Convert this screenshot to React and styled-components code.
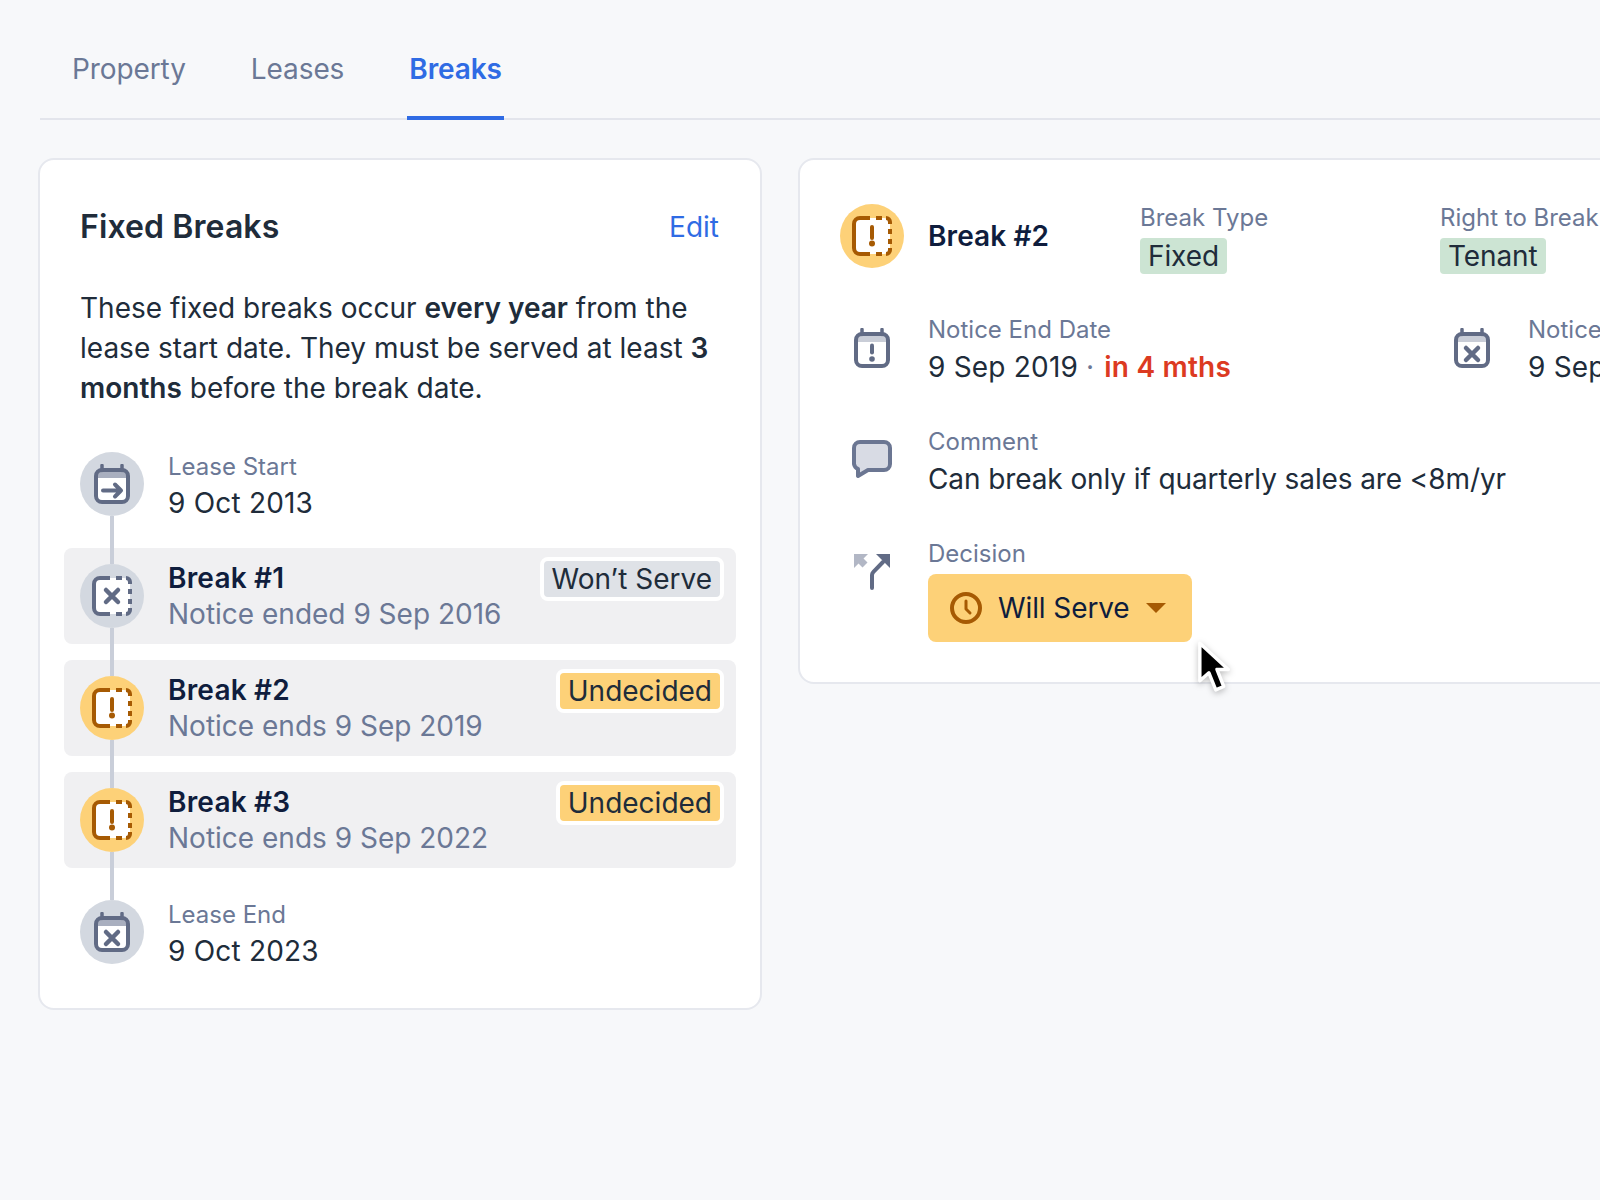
import React from "react";
import styled, { createGlobalStyle } from "styled-components";

const GlobalStyle = createGlobalStyle`
  html, body {
    margin: 0;
    height: 100%;
    overflow: hidden;
    background: #f7f8fa;
  }
  body {
    font-family: Inter, "Noto Sans", sans-serif;
    -webkit-font-smoothing: antialiased;
  }
`;

const SLATE = "#616b85";
const BROWN = "#a65a03";
const AMBER = "#fdd178";

const Page = styled.div`
  position: relative;
  width: 1600px;
  height: 1200px;
  overflow: hidden;
`;

const Tabs = styled.nav`
  display: flex;
  gap: 61px;
  height: 118px;
  margin: 0 0 0 40px;
  padding-left: 30px;
  border-bottom: 2px solid #e3e5ec;
`;

const Tab = styled.a`
  position: relative;
  padding: 49px 2px 0;
  font-size: 28px;
  line-height: 40px;
  letter-spacing: -0.1px;
  font-weight: ${(p) => (p.$active ? 600 : 400)};
  color: ${(p) => (p.$active ? "#2f6be4" : "#6b7896")};
  &::after {
    content: "";
    display: ${(p) => (p.$active ? "block" : "none")};
    position: absolute;
    left: 0;
    right: 0;
    bottom: -2px;
    height: 4px;
    background: #2f6be4;
  }
`;

const Columns = styled.div`
  display: flex;
  align-items: flex-start;
  gap: 36px;
  margin: 38px 0 0 38px;
`;

const Card = styled.section`
  box-sizing: border-box;
  flex: 0 0 724px;
  height: 852px;
  padding: 47px 40px 0;
  background: #fff;
  border: 2px solid #e6e8ee;
  border-radius: 16px;
`;

const Panel = styled.section`
  box-sizing: border-box;
  flex: 0 0 1000px;
  height: 526px;
  padding: 44px 40px 0;
  background: #fff;
  border: 2px solid #e6e8ee;
  border-radius: 16px;
`;

const CardHeader = styled.header`
  display: flex;
  justify-content: space-between;
  align-items: center;
  height: 40px;
`;

const CardTitle = styled.h2`
  margin: 0;
  font-size: 32px;
  line-height: 40px;
  letter-spacing: 0.1px;
  font-weight: 600;
  color: #202c3a;
`;

const EditLink = styled.a`
  margin-right: 1px;
  font-size: 28px;
  line-height: 40px;
  color: #2f6be4;
`;

const Intro = styled.p`
  margin: 41px 0 0;
  font-size: 28px;
  line-height: 40px;
  color: #202c3a;
  b {
    font-weight: 600;
  }
`;

const Timeline = styled.div`
  display: flex;
  flex-direction: column;
  gap: 16px;
  margin: 28px -16px 0;
`;

const Item = styled.div`
  display: flex;
  align-items: flex-start;
  height: 96px;
  box-sizing: border-box;
  padding: 16px 0 0 16px;
  border-radius: 8px;
  background: ${(p) => (p.$shaded ? "#f0f0f2" : "transparent")};
`;

const Marker = styled.div`
  position: relative;
  flex: none;
  display: flex;
  align-items: center;
  justify-content: center;
  width: 64px;
  height: 64px;
  border-radius: 50%;
  background: ${(p) => (p.$amber ? AMBER : "#d3d8e0")};
  &::after {
    content: "";
    display: ${(p) => (p.$last ? "none" : "block")};
    position: absolute;
    left: 30px;
    top: 64px;
    width: 4px;
    height: 48px;
    background: #c9ced9;
  }
`;

const ItemText = styled.div`
  flex: 1;
  margin: ${(p) => (p.$shaded ? -4 : -1)}px 0 0 24px;
`;

const Label = styled.div`
  font-size: 24px;
  line-height: 32px;
  color: #6b7896;
`;

const Value = styled.div`
  margin-top: 2px;
  font-size: 28px;
  line-height: 36px;
  letter-spacing: 0.2px;
  color: #202c3a;
`;

const FieldValue = styled(Value)`
  margin-top: 3px;
`;

const Sentence = styled(FieldValue)`
  letter-spacing: -0.1px;
`;

const ItemTitle = styled.div`
  font-size: 28px;
  line-height: 36px;
  letter-spacing: 0.2px;
  font-weight: 600;
  color: #0f1d3d;
`;

const ItemSub = styled.div`
  font-size: 28px;
  line-height: 36px;
  color: #6b7896;
`;

const Badge = styled.span`
  flex: none;
  margin: -7px 12px 0 0;
  padding: 0 8px;
  font-size: 28px;
  line-height: 36px;
  color: #202c3a;
  border: 4px solid #fff;
  border-radius: 8px;
  background: ${(p) => (p.$amber ? AMBER : "#dfe2e7")};
`;

const HeaderGrid = styled.div`
  display: grid;
  grid-template-columns: 300px 300px 1fr;
  grid-template-rows: 64px;
  align-items: center;
`;

const BreakHeading = styled.div`
  display: flex;
  align-items: center;
`;

const Field = styled.div`
  display: flex;
  align-items: flex-start;
`;

const HeaderField = styled.div`
  margin-top: 4px;
`;

const Tag = styled.span`
  display: block;
  width: fit-content;
  margin-top: 4px;
  padding: 0 8px;
  font-size: 28px;
  line-height: 36px;
  letter-spacing: -0.1px;
  color: #202c3a;
  border-radius: 4px;
  background: #cce4d3;
`;

const Row = styled.div`
  display: grid;
  grid-template-columns: ${(p) => p.$columns || "1fr"};
  margin-top: ${(p) => p.$top}px;
`;

const IconSlot = styled.div`
  flex: none;
  display: flex;
  justify-content: center;
  width: 64px;
  padding-top: ${(p) => p.$top || 14}px;
`;

const FieldText = styled.div`
  margin-left: 24px;
  white-space: nowrap;
`;

const BreakName = styled.div`
  margin-left: 24px;
  font-size: 28px;
  line-height: 36px;
  letter-spacing: 0.1px;
  font-weight: 600;
  color: #0f1d3d;
`;

const Urgent = styled.span`
  font-weight: 600;
  letter-spacing: 0.2px;
  color: #dc3a22;
`;

const Dot = styled.span`
  margin: 0 10px 0 8px;
  color: #6b7896;
`;

const Decision = styled.button`
  display: flex;
  align-items: center;
  width: 264px;
  height: 68px;
  margin-top: 4px;
  padding: 0 0 0 22px;
  border: 0;
  border-radius: 8px;
  background: ${AMBER};
  font-family: inherit;
  font-size: 28px;
  letter-spacing: -0.1px;
  color: #0f1d3d;
`;

const DecisionLabel = styled.span`
  margin: 0 16px;
  line-height: 36px;
`;

const Cursor = styled.svg`
  position: absolute;
  left: 1193px;
  top: 635px;
  filter: drop-shadow(0 2px 3px rgba(0, 0, 0, 0.25));
`;

function DashedSquare({ color, children }) {
  return (
    <svg width="40" height="40" viewBox="0 0 40 40" fill="none">
      <rect x="2" y="2" width="36" height="36" rx="6" fill="#fff" />
      <g stroke={color} strokeWidth="4">
        <path d="M18 2H8a6 6 0 0 0-6 6v24a6 6 0 0 0 6 6h10" />
        <path d="M24 2h6M24 38h6M38 13v5M38 23v5" />
        <path d="M34 2a4 4 0 0 1 4 4v2M34 38a4 4 0 0 0 4-4v-2" />
      </g>
      {children}
    </svg>
  );
}

function WarnSquare() {
  return (
    <DashedSquare color={BROWN}>
      <path d="M20 11v11" stroke={BROWN} strokeWidth="4" strokeLinecap="round" />
      <circle cx="20" cy="27.5" r="3" fill={BROWN} />
    </DashedSquare>
  );
}

function CrossSquare() {
  return (
    <DashedSquare color={SLATE}>
      <path d="M14 14l12 12M26 14L14 26" stroke={SLATE} strokeWidth="4.5" strokeLinecap="round" />
    </DashedSquare>
  );
}

function Calendar({ band = "#c9cdd7", children }) {
  return (
    <svg width="36" height="40" viewBox="0 0 36 40" fill="none">
      <rect x="2" y="6" width="32" height="32" rx="6" fill="#fff" />
      <path d="M2 14V12a6 6 0 0 1 6-6h20a6 6 0 0 1 6 6v2z" fill={band} />
      <rect x="2" y="6" width="32" height="32" rx="6" stroke={SLATE} strokeWidth="4" />
      <path d="M8 1.5v5M28 1.5v5" stroke={SLATE} strokeWidth="3.5" strokeLinecap="round" />
      {children}
    </svg>
  );
}

const CalendarArrow = () => (
  <Calendar band="#a9afbf">
    <path d="M9 26.5h18M21 20.5l6 6-6 6" stroke={SLATE} strokeWidth="4" strokeLinecap="round" strokeLinejoin="round" />
  </Calendar>
);

const CalendarCross = ({ band }) => (
  <Calendar band={band}>
    <path d="M12 20l12 12M24 20L12 32" stroke={SLATE} strokeWidth="4.5" strokeLinecap="round" />
  </Calendar>
);

const CalendarWarn = () => (
  <Calendar>
    <path d="M18 17.5v7" stroke={SLATE} strokeWidth="4" strokeLinecap="round" />
    <circle cx="18" cy="31" r="2.8" fill={SLATE} />
  </Calendar>
);

const CommentIcon = () => (
  <svg width="40" height="40" viewBox="0 0 40 40" fill="none">
    <path
      d="M8 2h24a6 6 0 0 1 6 6v16a6 6 0 0 1-6 6H16L6 36v-7.2A6 6 0 0 1 2 24V8a6 6 0 0 1 6-6z"
      fill="#d8dbe4"
      stroke="#6b7692"
      strokeWidth="4"
      strokeLinejoin="round"
    />
  </svg>
);

const DecisionIcon = () => (
  <svg width="36" height="36" viewBox="0 0 36 36" fill="none">
    <path d="M0 0h14l-4.5 4.5 4 4-5 5-4-4L0 14z" fill="#b2b7c5" />
    <path d="M18 34V21a4 4 0 0 1 1.2-2.8L29 8" stroke={SLATE} strokeWidth="4" strokeLinecap="round" />
    <path d="M22 0h14v14z" fill={SLATE} />
  </svg>
);

const ClockIcon = () => (
  <svg width="32" height="32" viewBox="0 0 32 32" fill="none">
    <circle cx="16" cy="16" r="14" stroke={BROWN} strokeWidth="4" />
    <path d="M16 9v8l4 4" stroke={BROWN} strokeWidth="3" strokeLinecap="round" strokeLinejoin="round" />
  </svg>
);

const Caret = () => (
  <svg width="20" height="10" viewBox="0 0 20 10">
    <path d="M0 0h20L10 10z" fill={BROWN} />
  </svg>
);

const breaks = [
  { name: "Break #1", note: "Notice ended 9 Sep 2016", status: "Won’t Serve" },
  { name: "Break #2", note: "Notice ends 9 Sep 2019", status: "Undecided", amber: true },
  { name: "Break #3", note: "Notice ends 9 Sep 2022", status: "Undecided", amber: true },
];

export default function App() {
  return (
    <Page>
      <GlobalStyle />
      <Tabs>
        <Tab>Property</Tab>
        <Tab>Leases</Tab>
        <Tab $active>Breaks</Tab>
      </Tabs>
      <Columns>
        <Card>
          <CardHeader>
            <CardTitle>Fixed Breaks</CardTitle>
            <EditLink>Edit</EditLink>
          </CardHeader>
          <Intro>
            These fixed breaks occur <b>every year</b> from the lease start date. They must be served at least{" "}
            <b>3 months</b> before the break date.
          </Intro>
          <Timeline>
            <Item>
              <Marker>
                <CalendarArrow />
              </Marker>
              <ItemText>
                <Label>Lease Start</Label>
                <Value>9 Oct 2013</Value>
              </ItemText>
            </Item>
            {breaks.map((b) => (
              <Item $shaded key={b.name}>
                <Marker $amber={b.amber}>{b.amber ? <WarnSquare /> : <CrossSquare />}</Marker>
                <ItemText $shaded>
                  <ItemTitle>{b.name}</ItemTitle>
                  <ItemSub>{b.note}</ItemSub>
                </ItemText>
                <Badge $amber={b.amber}>{b.status}</Badge>
              </Item>
            ))}
            <Item>
              <Marker $last>
                <CalendarCross band="#a9afbf" />
              </Marker>
              <ItemText>
                <Label>Lease End</Label>
                <Value>9 Oct 2023</Value>
              </ItemText>
            </Item>
          </Timeline>
        </Card>
        <Panel>
          <HeaderGrid>
            <BreakHeading>
              <Marker $amber $last>
                <WarnSquare />
              </Marker>
              <BreakName>Break #2</BreakName>
            </BreakHeading>
            <HeaderField>
              <Label>Break Type</Label>
              <Tag>Fixed</Tag>
            </HeaderField>
            <HeaderField>
              <Label>Right to Break</Label>
              <Tag>Tenant</Tag>
            </HeaderField>
          </HeaderGrid>
          <Row $columns="600px 1fr" $top={46}>
            <Field>
              <IconSlot>
                <CalendarWarn />
              </IconSlot>
              <FieldText>
                <Label>Notice End Date</Label>
                <FieldValue>
                  9 Sep 2019<Dot>·</Dot>
                  <Urgent>in 4 mths</Urgent>
                </FieldValue>
              </FieldText>
            </Field>
            <Field>
              <IconSlot>
                <CalendarCross />
              </IconSlot>
              <FieldText>
                <Label>Notice Served By</Label>
                <FieldValue>9 Sep 2019</FieldValue>
              </FieldText>
            </Field>
          </Row>
          <Row $top={41}>
            <Field>
              <IconSlot>
                <CommentIcon />
              </IconSlot>
              <FieldText>
                <Label>Comment</Label>
                <Sentence>Can break only if quarterly sales are &lt;8m/yr</Sentence>
              </FieldText>
            </Field>
          </Row>
          <Row $top={41}>
            <Field>
              <IconSlot $top={16}>
                <DecisionIcon />
              </IconSlot>
              <FieldText>
                <Label>Decision</Label>
                <Decision>
                  <ClockIcon />
                  <DecisionLabel>Will Serve</DecisionLabel>
                  <Caret />
                </Decision>
              </FieldText>
            </Field>
          </Row>
        </Panel>
      </Columns>
      <Cursor width="41" height="62" viewBox="0 0 36 54">
        <path d="M6 7v33l8-7 6 15 7-3-6-15h10z" fill="#000" stroke="#fff" strokeWidth="3" strokeLinejoin="round" />
      </Cursor>
    </Page>
  );
}
